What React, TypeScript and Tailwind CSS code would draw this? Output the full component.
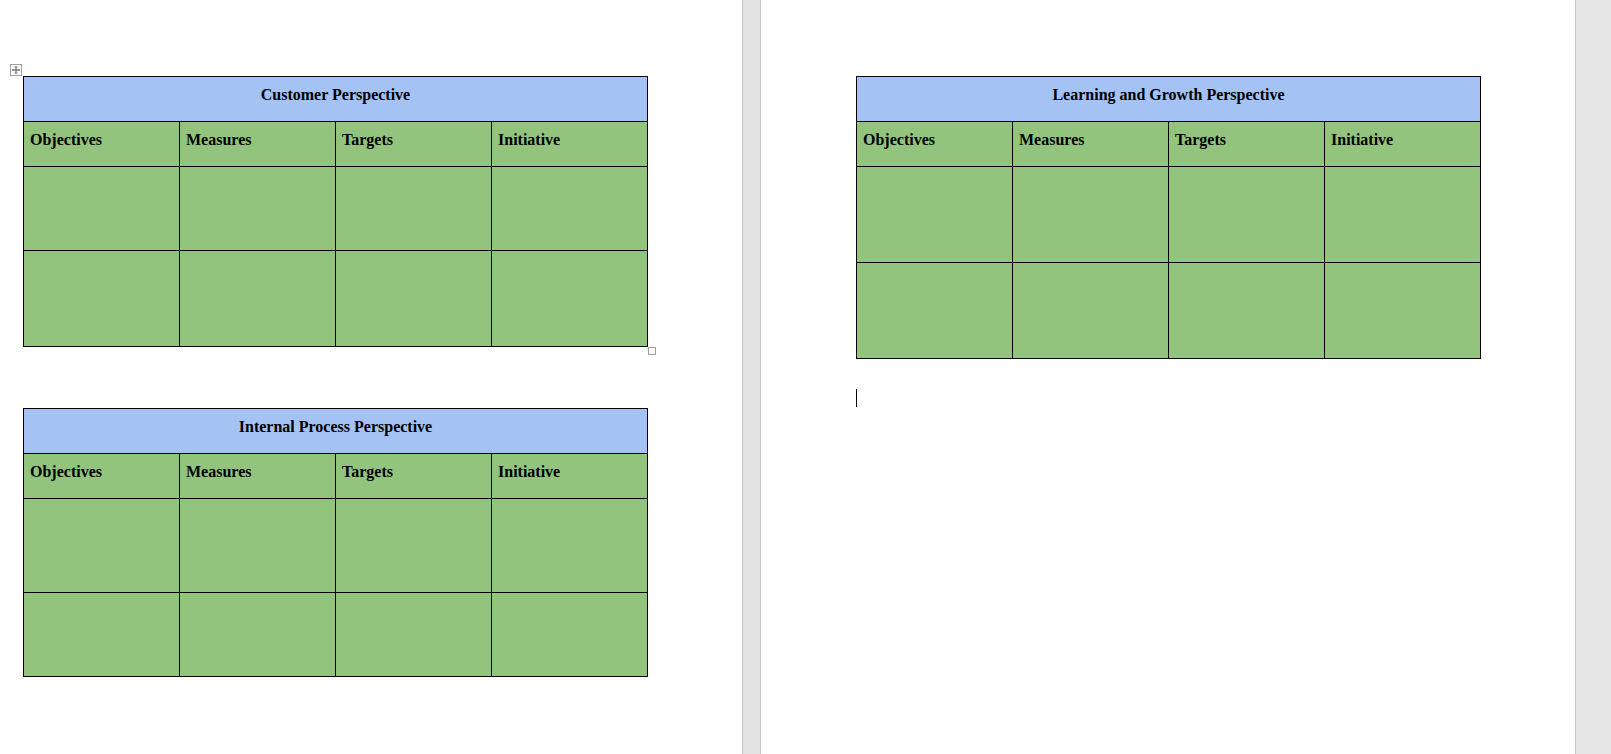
import React from "react";

type Table = {
  title: string;
  rows: number[]; // heights of the two empty body rows
};

const headers = ["Objectives", "Measures", "Targets", "Initiative"];

function MoveHandle() {
  return (
    <div className="absolute left-[10px] top-[64px] h-[12px] w-[12px] border border-[#a0a0a0] bg-white">
      <svg viewBox="0 0 10 10" className="h-[10px] w-[10px]" fill="none" stroke="#555" strokeWidth="1">
        <path d="M5 1.5v7M1.5 5h7" />
        <path d="M4 2.5l1-1 1 1M4 7.5l1 1 1-1M2.5 4l-1 1 1 1M7.5 4l1 1-1 1" />
      </svg>
    </div>
  );
}

function PerspectiveTable({ title, rows }: Table) {
  return (
    <div className="w-[625px] border-l border-t border-black font-['Liberation_Serif','Times_New_Roman',serif] text-[16px] leading-[18px] font-bold text-black">
      <div className="h-[45px] border-r border-b border-black bg-[#a4c2f4] pt-[9px] text-center">{title}</div>
      <div className="grid grid-cols-[156px_156px_156px_156px]">
        {headers.map((h) => (
          <div key={h} className="h-[45px] border-r border-b border-black bg-[#93c47d] pl-[6px] pt-[9px]">
            {h}
          </div>
        ))}
        {rows.map((height, r) =>
          headers.map((h) => (
            <div
              key={`${r}-${h}`}
              className={`border-r border-b border-black bg-[#93c47d] ${height === 84 ? "h-[84px]" : height === 94 ? "h-[94px]" : "h-[96px]"}`}
            />
          ))
        )}
      </div>
    </div>
  );
}

export default function App() {
  return (
    <div className="flex h-[754px] w-[1611px] overflow-hidden bg-white">
      {/* left page */}
      <div className="relative w-[742px] shrink-0 bg-white pl-[23px] pt-[76px]">
        <MoveHandle />
        <div className="relative">
          <PerspectiveTable title="Customer Perspective" rows={[84, 96]} />
          <div className="absolute left-[625px] top-[271px] h-[8px] w-[8px] border border-[#a0a0a0] bg-white" />
        </div>
        <div className="mt-[61px]">
          <PerspectiveTable title="Internal Process Perspective" rows={[94, 84]} />
        </div>
      </div>

      {/* gap between pages */}
      <div className="w-[19px] shrink-0 border-x border-[#c8c8c8] bg-[#e3e3e3]" />

      {/* right page */}
      <div className="w-[814px] shrink-0 bg-white pl-[95px] pt-[76px]">
        <PerspectiveTable title="Learning and Growth Perspective" rows={[96, 96]} />
        <div className="mt-[30px] h-[18px] w-px bg-black" />
      </div>

      <div className="flex-1 border-l border-[#c8c8c8] bg-[#e6e6e6]" />
    </div>
  );
}
